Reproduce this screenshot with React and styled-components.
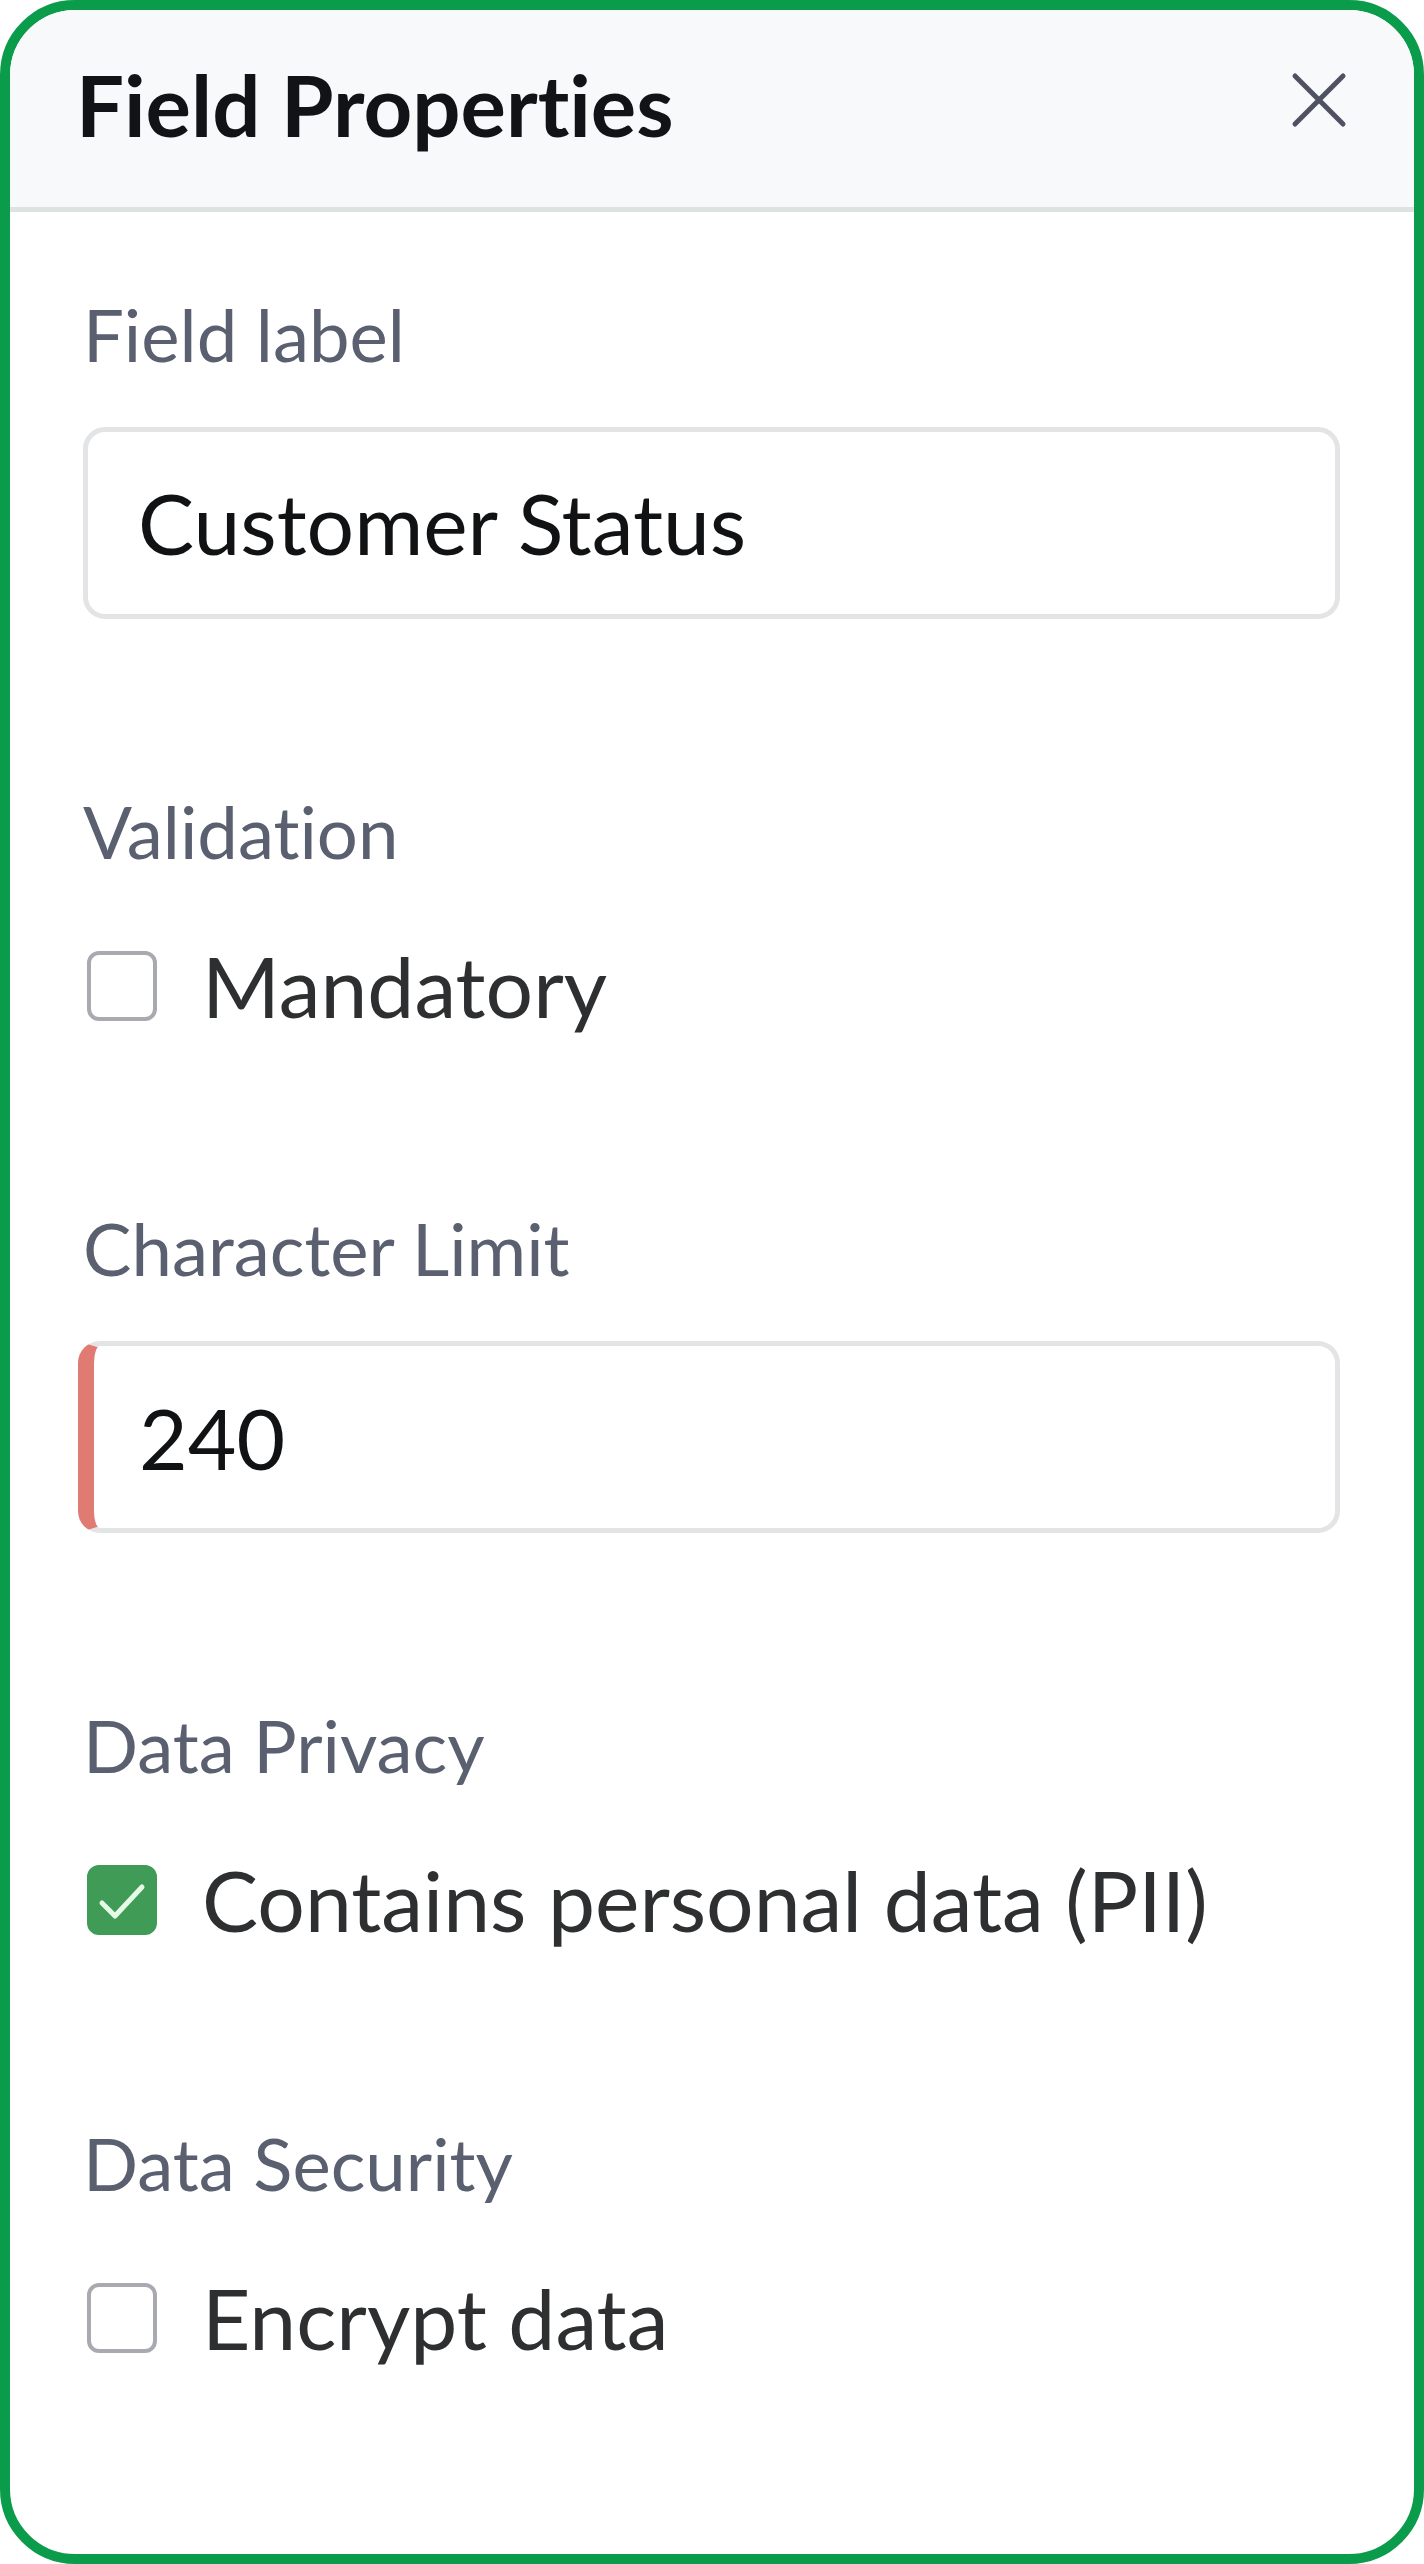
import React from "react";
import styled, { createGlobalStyle } from "styled-components";

const GlobalStyle = createGlobalStyle`
  html, body {
    margin: 0;
    padding: 0;
    background: #ffffff;
  }
  body {
    font-family: Lato, "Noto Sans", "Liberation Sans", sans-serif;
    font-variant-ligatures: none;
  }
  * {
    box-sizing: border-box;
  }
`;

const Panel = styled.aside`
  height: 2564px;
  width: 100%;
  display: flex;
  flex-direction: column;
  border: 10px solid #0a9b4b;
  border-radius: 75px;
  overflow: hidden;
  background: #ffffff;
`;

const Header = styled.header`
  display: flex;
  justify-content: space-between;
  align-items: flex-start;
  padding: 43px 67px 52px 66px;
  background: #f8f9fa;
  border-bottom: 5px solid #dde2e2;
`;

const Title = styled.h1`
  margin: 0;
  font-size: 85px;
  font-weight: 700;
  line-height: 1.2;
  color: #121317;
  font-variant-ligatures: none;
`;

const CloseButton = styled.button`
  width: 56px;
  height: 56px;
  margin-top: 19px;
  padding: 0;
  border: 0;
  background: none;
  cursor: pointer;
  display: block;

  svg {
    display: block;
  }
`;

const Body = styled.div`
  flex: 1;
  display: flex;
  flex-direction: column;
  gap: 168px;
  padding: 78px 74px 0 73px;
`;

const Section = styled.section`
  display: flex;
  flex-direction: column;
`;

const Label = styled.label`
  display: block;
  margin-bottom: 48px;
  font-size: 72.5px;
  line-height: 1.225;
  color: #5a6070;
`;

const TextInput = styled.input`
  display: block;
  height: 192px;
  padding: 0 0 0 ${(p) => (p.$error ? "45px" : "50px")};
  font-family: inherit;
  font-size: 84px;
  line-height: 1.2;
  font-variant-ligatures: none;
  color: #111214;
  background: #ffffff;
  border: 5px solid #e3e4e6;
  border-left: ${(p) => (p.$error ? "16px solid #e07b74" : "5px solid #e3e4e6")};
  margin: 0 0 0 ${(p) => (p.$error ? "-5px" : "0")};
  width: ${(p) => (p.$error ? "calc(100% + 5px)" : "100%")};
  border-radius: 22px;
  outline: none;
`;

const CheckRow = styled.label`
  display: flex;
  align-items: center;
  gap: 45px;
  margin-top: 12px;
  cursor: pointer;
`;

const Box = styled.span`
  flex: none;
  width: 70px;
  height: 70px;
  margin-left: 4px;
  border-radius: 12px;
  border: 4px solid ${(p) => (p.$checked ? "#3f9b56" : "#a9aab1")};
  background: ${(p) => (p.$checked ? "#3f9b56" : "#ffffff")};
  position: relative;

  svg {
    position: absolute;
    left: -4px;
    top: -4px;
  }
`;

const CheckText = styled.span`
  font-size: 84px;
  line-height: 1.2;
  color: #2e2f31;
`;

function CloseIcon() {
  return (
    <svg width="56" height="56" viewBox="0 0 56 56" fill="none">
      <path
        d="M4 4 L52 52 M52 4 L4 52"
        stroke="#4d5162"
        strokeWidth="5"
        strokeLinecap="round"
      />
    </svg>
  );
}

function Checkbox({ checked, children }) {
  return (
    <CheckRow>
      <Box $checked={checked} role="checkbox" aria-checked={checked}>
        {checked && (
          <svg width="70" height="70" viewBox="0 0 70 70" fill="none">
            <path
              d="M15 38 L28 51 L55 22"
              stroke="#e6fbe6"
              strokeWidth="5"
              strokeLinecap="round"
              strokeLinejoin="round"
            />
          </svg>
        )}
      </Box>
      <CheckText>{children}</CheckText>
    </CheckRow>
  );
}

export default function App() {
  return (
    <>
      <GlobalStyle />
      <Panel>
        <Header>
          <Title>Field Properties</Title>
          <CloseButton aria-label="Close">
            <CloseIcon />
          </CloseButton>
        </Header>
        <Body>
          <Section>
            <Label>Field label</Label>
            <TextInput defaultValue="Customer Status" readOnly />
          </Section>
          <Section>
            <Label as="div">Validation</Label>
            <Checkbox checked={false}>Mandatory</Checkbox>
          </Section>
          <Section>
            <Label>Character Limit</Label>
            <TextInput $error defaultValue="240" readOnly />
          </Section>
          <Section>
            <Label as="div">Data Privacy</Label>
            <Checkbox checked>Contains personal data (PII)</Checkbox>
          </Section>
          <Section>
            <Label as="div">Data Security</Label>
            <Checkbox checked={false}>Encrypt data</Checkbox>
          </Section>
        </Body>
      </Panel>
    </>
  );
}
